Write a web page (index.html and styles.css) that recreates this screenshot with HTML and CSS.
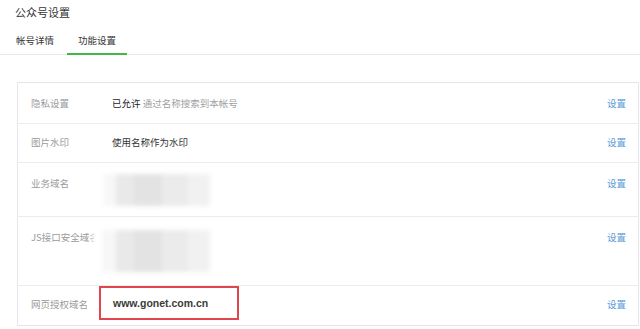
FILE: index.html
```html
<!DOCTYPE html>
<html lang="zh-CN">
<head>
<meta charset="utf-8">
<title>公众号设置</title>
<link rel="stylesheet" href="styles.css">
</head>
<body>
<div class="page">
  <div class="title">公众号设置</div>
  <div class="tabs">
    <div class="tab">帐号详情</div>
    <div class="tab active">功能设置</div>
  </div>
  <div class="card">
    <div class="row r1">
      <div class="label">隐私设置</div>
      <div class="value"><span class="strong">已允许</span> <span class="muted">通过名称搜索到本帐号</span></div>
      <a class="link">设置</a>
    </div>
    <div class="row r2">
      <div class="label">图片水印</div>
      <div class="value">使用名称作为水印</div>
      <a class="link">设置</a>
    </div>
    <div class="row r3">
      <div class="label">业务域名</div>
      <div class="value"><div class="blur b1"></div></div>
      <a class="link">设置</a>
    </div>
    <div class="row r4">
      <div class="label">JS接口安全域名</div>
      <div class="value"><div class="blur b2"></div></div>
      <a class="link">设置</a>
    </div>
    <div class="row r5">
      <div class="label">网页授权域名</div>
      <div class="value"><div class="boxed">www.gonet.com.cn</div></div>
      <a class="link">设置</a>
    </div>
  </div>
</div>
</body>
</html>
```

FILE: styles.css
```css
* { box-sizing: border-box; }
html, body { margin: 0; padding: 0; background: #fff; }
body {
  font-family: "Noto Sans CJK SC", "Noto Sans", sans-serif;
  color: #353535;
  width: 640px;
  height: 329px;
  overflow: hidden;
}
.title {
  font-size: 11px;
  line-height: 16px;
  padding: 4px 0 0 15px;
  color: #353535;
}
.tabs {
  display: flex;
  gap: 2px;
  padding-left: 5px;
  border-bottom: 1px solid #e6e8ea;
}
.tab {
  font-size: 9.5px;
  line-height: 14px;
  padding: 13px 11px 6px;
  border-bottom: 2px solid transparent;
  margin-bottom: -1px;
  color: #353535;
}
.tab.active { border-bottom-color: #44b549; }
.card {
  margin: 27px 1px 0 17px;
  border: 1px solid #e7e7eb;
}
.row {
  display: grid;
  grid-template-columns: 81px 1fr auto;
  align-items: start;
  padding: 13px 12px 0 13px;
  border-top: 1px solid #ededf0;
  font-size: 9.5px;
  line-height: 14px;
}
.row.r1 { border-top: none; height: 40px; }
.row.r2 { height: 39px; padding-top: 11px; }
.row.r3 { height: 54px; }
.row.r4 { height: 69px; }
.row.r5 { height: 40px; padding-top: 0; }
.label { color: #9a9a9a; white-space: nowrap; overflow: hidden; }
.r5 .label, .r5 .link { margin-top: 11px; }
.value { color: #353535; }
.strong { color: #222; }
.muted { color: #a0a0a0; }
.link { color: #5a9bd8; }
.blur {
  position: relative;
  z-index: 1;
  width: 106px;
  filter: blur(2px);
  margin-left: -8px;
  background:
    linear-gradient(90deg, #f7f7f7 0 12px, #e9e9e9 12px 30px, #e3e3e3 30px 58px, #ebebeb 58px 84px, #f1f1f1 84px 106px);
}
.b1 { height: 32px; margin-top: -2px; }
.b2 {
  height: 42px;
  margin-left: -20px;
  width: 118px;
  background:
    linear-gradient(90deg, #fff 0 10px, #f7f7f7 10px 24px, #e9e9e9 24px 42px, #e3e3e3 42px 70px, #ebebeb 70px 96px, #f1f1f1 96px 118px);
}
.boxed {
  margin-left: -13px;
  width: 140px;
  height: 34px;
  border: 2px solid #e0464c;
  padding-left: 12px;
  font-family: "Liberation Sans", Arial, sans-serif;
  font-weight: bold;
  font-size: 10.5px;
  line-height: 30px;
  color: #3a3a3a;
}
```
